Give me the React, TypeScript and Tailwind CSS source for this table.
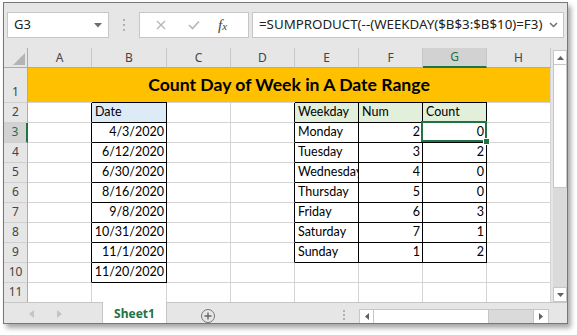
import React from 'react';

const COLS = ['A', 'B', 'C', 'D', 'E', 'F', 'G', 'H'];
const dates = ['4/3/2020', '6/12/2020', '6/30/2020', '8/16/2020', '9/8/2020', '10/31/2020', '11/1/2020', '11/20/2020'];
const days = ['Monday', 'Tuesday', 'Wednesday', 'Thursday', 'Friday', 'Saturday', 'Sunday'];
const nums = [2, 3, 4, 5, 6, 7, 1];
const counts = [0, 2, 0, 0, 3, 1, 2];

function inTable(r: number, c: number) {
  if (c === 1 && r >= 2 && r <= 10) return true;
  if (c >= 4 && c <= 6 && r >= 2 && r <= 9) return true;
  return false;
}

type Content = { text: string; right: boolean; bg: string };

function content(r: number, c: number): Content {
  let text = '';
  let right = false;
  let bg = 'bg-white';
  if (r === 2 && c === 1) { text = 'Date'; bg = 'bg-[#ddebf7]'; }
  if (r === 2 && c === 4) { text = 'Weekday'; bg = 'bg-[#e2efda]'; }
  if (r === 2 && c === 5) { text = 'Num'; bg = 'bg-[#e2efda]'; }
  if (r === 2 && c === 6) { text = 'Count'; bg = 'bg-[#e2efda]'; }
  if (c === 1 && r >= 3 && r <= 10) { text = dates[r - 3]; right = true; }
  if (c === 4 && r >= 3 && r <= 9) { text = days[r - 3]; }
  if (c === 5 && r >= 3 && r <= 9) { text = String(nums[r - 3]); right = true; }
  if (c === 6 && r >= 3 && r <= 9) { text = String(counts[r - 3]); right = true; }
  return { text, right, bg };
}

const cellFont = { fontFamily: 'Lato, "Liberation Sans", sans-serif' };
const uiFont = { fontFamily: '"Noto Sans", "Liberation Sans", sans-serif' };

function Cell({ r, c }: { r: number; c: number }) {
  const { text, right, bg } = content(r, c);
  const rb = inTable(r, c) || inTable(r, c + 1);
  const bb = inTable(r, c) || inTable(r + 1, c);
  const last = r === 11;
  const selected = r === 3 && c === 6;
  return (
    <div
      className={[
        'flex items-end whitespace-nowrap pl-[3px] pr-[2px] pb-[2px] text-[12.5px] leading-[16px] text-black border-r',
        selected ? 'relative' : 'overflow-hidden',
        last ? 'border-b-0' : 'border-b',
        rb ? 'border-r-black' : 'border-r-[#d4d4d4]',
        bb ? 'border-b-black' : 'border-b-[#d4d4d4]',
        right ? 'justify-end' : 'justify-start',
        bg,
      ].join(' ')}
      style={cellFont}
    >
      {text}
      {selected && (
        <>
          <div className="absolute left-[-2px] top-[-2px] w-[66px] h-[21px] border-2 border-[#217346]" />
          <div className="absolute left-[60px] top-[15px] w-[7px] h-[7px] bg-[#217346] border border-white" />
        </>
      )}
    </div>
  );
}

function RowHeader({ r }: { r: number }) {
  const sel = r === 3;
  return (
    <div
      className={[
        'flex items-end justify-center pb-[2px] text-[12px] leading-[16px]',
        sel ? 'bg-[#d2d2d2] border-r-2 border-r-[#217346] text-[#217346]' : 'bg-[#e6e6e6] border-r border-r-[#ababab] text-[#444]',
        r === 11 ? 'border-b-0' : 'border-b border-b-[#cfcfcf]',
      ].join(' ')}
      style={uiFont}
    >
      {r}
    </div>
  );
}

export default function App() {
  const rows: React.ReactNode[] = [];
  for (let r = 2; r <= 11; r++) {
    rows.push(<RowHeader key={'h' + r} r={r} />);
    for (let c = 0; c < 8; c++) rows.push(<Cell key={r + '-' + c} r={r} c={c} />);
  }
  const stripCols = [0, 1, 2, 3, 4, 5, 6, 7];

  return (
    <div className="w-[577px] h-[335px] bg-white pt-[2px] pl-[3px]">
      <div className="w-[565px] h-[322px] border border-[#777] bg-[#e6e6e6] flex flex-col shadow-[3px_4px_5px_rgba(0,0,0,0.35)]">
        {/* formula bar */}
        <div className="h-[45px] flex items-start pt-[9px] pl-[3px]" style={uiFont}>
          <div className="w-[102px] h-[26px] bg-white border border-[#c6c6c6] flex items-center justify-between pl-[6px] pr-[6px] text-[13px] text-[#222]">
            <span>G3</span>
            <svg width="8" height="5" viewBox="0 0 8 5"><path d="M0 0 L8 0 L4 4.5 Z" fill="#6e6e6e" /></svg>
          </div>
          <div className="w-[30px] h-[26px] flex flex-col items-center justify-center gap-[3px]">
            <div className="w-[2px] h-[2px] bg-[#b0b0b0]" />
            <div className="w-[2px] h-[2px] bg-[#b0b0b0]" />
            <div className="w-[2px] h-[2px] bg-[#b0b0b0]" />
          </div>
          <div className="w-[110px] h-[26px] bg-white border border-[#c6c6c6] flex items-center pl-[16px]">
            <svg width="10" height="10" viewBox="0 0 10 10"><path d="M1 1 L9 9 M9 1 L1 9" stroke="#b5b5b5" strokeWidth="1.3" /></svg>
            <svg width="12" height="10" viewBox="0 0 12 10" className="ml-[22px]"><path d="M1 5 L4.5 8.5 L11 1.5" stroke="#b5b5b5" strokeWidth="1.6" fill="none" /></svg>
            <span className="ml-[18px] italic text-[15px] text-[#444] leading-none" style={{ fontFamily: '"Liberation Serif", serif' }}>
              f<span className="text-[11px]">x</span>
            </span>
          </div>
          <div className="ml-[3px] w-[312px] h-[26px] bg-white border border-[#c6c6c6] flex items-center justify-between pl-[6px] pr-[5px] text-[13.3px] text-[#222] whitespace-nowrap">
            <span>=SUMPRODUCT(--(WEEKDAY($B$3:$B$10)=F3)</span>
            <svg width="9" height="6" viewBox="0 0 9 6"><path d="M1 1 L4.5 4.5 L8 1" stroke="#6e6e6e" strokeWidth="1.5" fill="none" /></svg>
          </div>
        </div>

        {/* sheet */}
        <div className="flex">
          <div className="grid grid-cols-[24px_64px_75px_64px_64px_64px_64px_64px_64px] grid-rows-[20px_35px_repeat(9,20px)_19px] w-[547px] bg-white">
            {/* corner */}
            <div className="bg-[#e6e6e6] border-r border-b border-[#ababab] flex items-end justify-end pr-[2px] pb-[2px]">
              <svg width="12" height="12" viewBox="0 0 12 12"><path d="M12 0 L12 12 L0 12 Z" fill="#b4b4b4" /></svg>
            </div>
            {COLS.map((l) => {
              const sel = l === 'G';
              return (
                <div
                  key={l}
                  className={[
                    'flex items-center justify-center text-[12px] border-r border-r-[#c8c8c8]',
                    sel ? 'bg-[#d2d2d2] border-b-2 border-b-[#217346] text-[#217346]' : 'bg-[#e6e6e6] border-b border-b-[#ababab] text-[#444]',
                  ].join(' ')}
                  style={uiFont}
                >
                  {l}
                </div>
              );
            })}
            {/* row 1 */}
            <RowHeader r={1} />
            <div className="col-span-8 bg-[#ffc000] border-r border-r-[#d4d4d4] flex flex-col">
              <div
                className="flex-1 flex items-center justify-center font-bold text-[17.6px] text-black pt-[1px]"
                style={cellFont}
              >
                Count Day of Week in A Date Range
              </div>
              <div className="h-px grid grid-cols-[64px_75px_64px_64px_64px_64px_64px_63px]">
                {stripCols.map((c) => (
                  <div key={c} className={inTable(2, c) ? 'bg-black' : 'bg-[#d4d4d4]'} />
                ))}
              </div>
            </div>
            {rows}
          </div>
          {/* vertical scrollbar */}
          <div className="w-[16px] pl-[2px] pt-[2px] flex flex-col">
            <div className="h-[15px] bg-white border border-[#c6c6c6] flex items-center justify-center">
              <svg width="7" height="4" viewBox="0 0 7 4"><path d="M0 4 L7 4 L3.5 0 Z" fill="#606060" /></svg>
            </div>
            <div className="h-[123px] bg-white border-x border-b border-[#c6c6c6]" />
            <div className="flex-1 bg-[#dadada]" />
            <div className="h-[15px] bg-white border border-[#c6c6c6] flex items-center justify-center">
              <svg width="7" height="4" viewBox="0 0 7 4"><path d="M0 0 L7 0 L3.5 4 Z" fill="#606060" /></svg>
            </div>
          </div>
        </div>

        {/* tab bar */}
        <div className="flex-1 flex" style={uiFont}>
          <div className="w-[98px] border-t border-[#c6c6c6] flex items-center pt-[2px] pl-[25px]">
            <svg width="5" height="8" viewBox="0 0 5 8"><path d="M5 0 L5 8 L0 4 Z" fill="#c4c4c4" /></svg>
            <svg width="5" height="8" viewBox="0 0 5 8" className="ml-[23px]"><path d="M0 0 L0 8 L5 4 Z" fill="#c4c4c4" /></svg>
          </div>
          <div className="w-[65px] bg-white border-x border-[#c6c6c6] flex items-center justify-center pt-[2px] text-[12px] font-bold text-[#217346]">
            Sheet1
          </div>
          <div className="flex-1 border-t border-[#c6c6c6] flex items-center">
            <div className="ml-[34px] mt-[5px] w-[14px] h-[14px] rounded-full border border-[#777] flex items-center justify-center">
              <svg width="8" height="8" viewBox="0 0 8 8"><path d="M4 0.5 V7.5 M0.5 4 H7.5" stroke="#666" strokeWidth="1.4" /></svg>
            </div>
            <div className="ml-[128px] mt-[4px] flex flex-col gap-[2px]">
              <div className="w-[2px] h-[2px] bg-[#b0b0b0]" />
              <div className="w-[2px] h-[2px] bg-[#b0b0b0]" />
              <div className="w-[2px] h-[2px] bg-[#b0b0b0]" />
            </div>
            <div className="ml-[14px] self-end h-[14px] w-[190px] flex border-t border-x border-[#c6c6c6]">
              <div className="w-[14px] bg-white border-r border-[#c6c6c6] flex items-center justify-center">
                <svg width="4" height="7" viewBox="0 0 4 7"><path d="M4 0 L4 7 L0 3.5 Z" fill="#606060" /></svg>
              </div>
              <div className="w-[115px] bg-white border-r border-[#c6c6c6]" />
              <div className="flex-1 bg-[#dadada]" />
              <div className="w-[15px] bg-white border-l border-[#c6c6c6] flex items-center justify-center">
                <svg width="4" height="7" viewBox="0 0 4 7"><path d="M0 0 L0 7 L4 3.5 Z" fill="#606060" /></svg>
              </div>
            </div>
          </div>
        </div>
      </div>
    </div>
  );
}
